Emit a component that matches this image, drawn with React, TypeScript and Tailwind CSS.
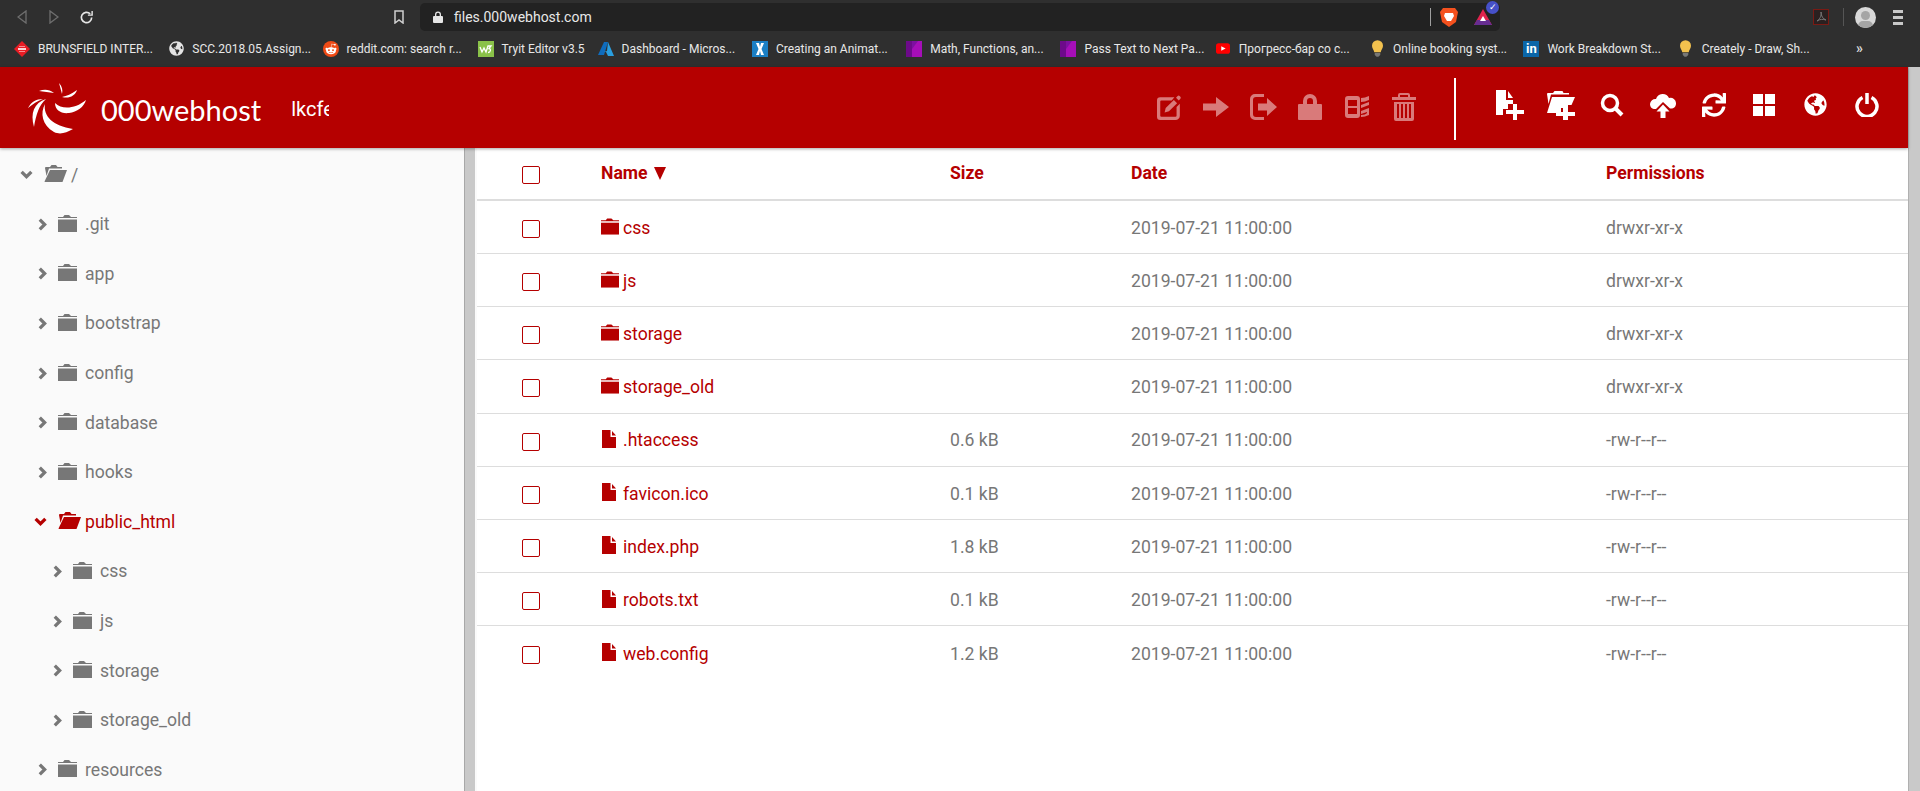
import React from 'react';
import { FaGlobeAmericas, FaRedditAlien, FaSync } from 'react-icons/fa';

function FolderClosed({ className }: { className?: string }) {
  return (
    <svg viewBox="0 0 19 17" fill="currentColor" className={className}>
      <path d="M0 3V2h5l1.5-2H11l2 2h6v1z" />
      <path d="M0 4.5h19V17H0z" />
    </svg>
  );
}

function FolderOpen({ className }: { className?: string }) {
  return (
    <svg viewBox="0 0 23 17" fill="currentColor" className={className}>
      <path d="M1 3l.5-1H6l1.5-2H12l1.5 2H18v1.5H5L2.5 11z" />
      <path d="M6 5h17l-4.5 12H0.5L1 15.5z" />
    </svg>
  );
}

function FileIcon({ className }: { className?: string }) {
  return (
    <svg viewBox="0 0 14 18" fill="currentColor" className={className}>
      <path d="M0 0h8.5v7H14v11H0z" />
      <path d="M10 1l4 4.5h-4z" />
    </svg>
  );
}

function Chevron({ open, className }: { open?: boolean; className?: string }) {
  return (
    <svg viewBox="0 0 12 12" fill="none" stroke="currentColor" strokeWidth="3" className={className}>
      {open ? <path d="M1.5 3.5 6 8l4.5-4.5" /> : <path d="M3.5 1.5 8 6l-4.5 4.5" />}
    </svg>
  );
}

function Logo() {
  return (
    <svg viewBox="0 0 60 52" fill="#fff" className="w-[60px] h-[52px]">
      <path d="M17 21c-2 12 8 22 28 25-7 4-13 6-19 3C14 42 12 30 17 21z" />
      <path d="M27 20c7 7 20 6 31-3-2 7-9 12-17 13-8 1-14-3-14-10z" />
      <path d="M6 44C2 30 6 20 18 16 11 22 8 32 6 44z" />
      <path d="M0 25c3-6 8-9 15-9-6 2-10 5-15 9z" />
      <path d="M11 8c5-2 10-2 15 2-5-1-10-1-15-2z" />
      <path d="M31 0c3 3 4 7 3 11-1-4-2-7-3-11z" />
      <path d="M34 14c5-1 9-3 15-7-2 6-8 9-15 7z" />
    </svg>
  );
}

function EditIcon() {
  return (
    <svg viewBox="1 1 23 23" className="w-[25px] h-[25px]" fill="currentColor">
      <path d="M4 3h13l-2.500 3H5a1 1 0 0 0-1 1v13a1 1 0 0 0 1 1h13a1 1 0 0 0 1-1v-8l3-3v11a4 4 0 0 1-4 4H4a3 3 0 0 1-3-3V6a3 3 0 0 1 3-3z" />
      <path d="M8 17l1-4 7.500-7.500 3 3L12 16zM18.500 3.500 20 2a1.300 1.300 0 0 1 1.800 0l.7.700a1.300 1.300 0 0 1 0 1.800L21 6z" />
    </svg>
  );
}

function ArrowIcon() {
  return (
    <svg viewBox="0 0 26 20" className="w-[26px] h-[20px]" fill="currentColor">
      <path d="M0 6.500h13V0l13 10-13 10v-6.500H0z" />
    </svg>
  );
}

function ExitIcon() {
  return (
    <svg viewBox="0 0 27 26" className="w-[27px] h-[26px]" fill="currentColor">
      <path d="M5 0h9v3H6a3 3 0 0 0-3 3v14a3 3 0 0 0 3 3h8v3H5a5 5 0 0 1-5-5V5a5 5 0 0 1 5-5z" />
      <path d="M8 9.500h9V4l10 9-10 9v-5.500H8z" />
    </svg>
  );
}

function LockIcon() {
  return (
    <svg viewBox="0 0 24 26" className="w-[24px] h-[26px]" fill="currentColor">
      <path fillRule="evenodd" d="M5 10V7a7 7 0 0 1 14 0v3h4a1 1 0 0 1 1 1v14a1 1 0 0 1-1 1H1a1 1 0 0 1-1-1V11a1 1 0 0 1 1-1zm4 0h6V7a3 3 0 0 0-6 0z" />
    </svg>
  );
}

function CompressedIcon() {
  return (
    <svg viewBox="0 0 24 26" className="w-[24px] h-[26px]" fill="currentColor">
      <path fillRule="evenodd" d="M3 2h9a3 3 0 0 1 3 3v16a3 3 0 0 1-3 3H3a3 3 0 0 1-3-3V5a3 3 0 0 1 3-3zm0 4v6h9V6zm0 8v6h9v-6z" />
      <path d="M16 4c3 0 5-1 8-2v4c-3 1-5 2-8 2zM16 11c3-1 5-2 8-3v3c-3 1-5 2-8 3zM16 17c3-1 5-2 8-3v7c-3 1-5 2-8 2v-2c3 0 5-1 6-2v-1c-2 1-4 1-6 2z" />
    </svg>
  );
}

function TrashIcon() {
  return (
    <svg viewBox="0 0 24 28" className="w-[24px] h-[28px]" fill="currentColor">
      <path d="M8 0h8a2 2 0 0 1 2 2v2h6v3H0V4h6V2a2 2 0 0 1 2-2zm0 2v2h8V2z" fillRule="evenodd" />
      <path fillRule="evenodd" d="M2 9h20v17a2 2 0 0 1-2 2H4a2 2 0 0 1-2-2zm3 2v14h2V11zm4 0v14h2V11zm4 0v14h2V11zm4 0v14h2V11z" />
    </svg>
  );
}

function NewFileIcon() {
  return (
    <svg viewBox="0 0 28 30" className="w-[28px] h-[30px]" fill="currentColor">
      <path d="M0 0h10v10h7v4h-5v5H7v6H0z" />
      <path d="M12 1l5 7h-5z" />
      <path d="M17 14h4v6h7v4h-7v6h-4v-6h-7v-4h7z" />
    </svg>
  );
}

function NewFolderIcon() {
  return (
    <svg viewBox="0 0 29 30" className="w-[29px] h-[30px]" fill="currentColor">
      <path d="M1 4l.5-1H7l1.500-2h8l1 2H23v1.500H5L2.500 14z" />
      <path d="M6 7h23l-3.500 8H22v3h-7v4h-3v1H1z" />
      <path d="M17 15h5v7h7v4h-7v4h-5v-4h-7v-4h7z" />
    </svg>
  );
}

function SearchIcon() {
  return (
    <svg viewBox="0 0 24 24" className="w-[24px] h-[24px]" fill="none" stroke="currentColor">
      <circle cx="10" cy="10" r="7.500" strokeWidth="3.500" />
      <path d="M15.500 15.500 22 22" strokeWidth="4" />
    </svg>
  );
}

function CloudUpIcon() {
  return (
    <svg viewBox="0 0 26 26" className="w-[26px] h-[26px]" fill="currentColor">
      <path d="M6 7a7 7 0 0 1 13-1 5.500 5.500 0 0 1 7 5.500c0 3-2 5-5 5h-1L13 10l-7 7H5c-3 0-5-2-5-5a5.500 5.500 0 0 1 6-5z" />
      <path d="M13 12.500l6.500 7H15.500V26h-5v-6.500H6.500z" />
    </svg>
  );
}

function GridIcon() {
  return (
    <svg viewBox="0 0 22 22" className="w-[22px] h-[22px]" fill="currentColor">
      <path d="M0 0h10v10H0zM12 0h10v10H12zM0 12h10v10H0zM12 12h10v10H12z" />
    </svg>
  );
}

function PowerIcon() {
  return (
    <svg viewBox="0 0 24 24" className="w-[24px] h-[24px]" fill="none" stroke="currentColor" strokeWidth="3.500">
      <path d="M7.500 4.500a10 10 0 1 0 9 0" />
      <path d="M12 0v11" />
    </svg>
  );
}

function Bulb() {
  return (
    <svg viewBox="0 0 12 18" className="w-[11px] h-[17px]">
      <path d="M6 0a6 6 0 0 1 6 6c0 3-2 4-2.500 7h-7C2 10 0 9 0 6a6 6 0 0 1 6-6z" fill="#f2c14e" />
      <path d="M3 14h6v2l-2 2H5l-2-2z" fill="#777" />
    </svg>
  );
}

function NotebookIcon() {
  return (
    <svg viewBox="0 0 16 16" className="w-4 h-4">
      <path d="M0 0h16v16H0z" fill="#a60eb8" />
      <path d="M0 0h6v16H0z" fill="#6d0a8a" />
      <path d="M6 0h6L6 8z" fill="#7c10a0" />
    </svg>
  );
}

const bookmarks: { label: string; width: string; icon: React.ReactNode }[] = [
  {
    label: 'BRUNSFIELD INTER...',
    width: 'w-[154.300px]',
    icon: (
      <svg viewBox="0 0 16 16" className="w-4 h-4">
        <path d="M8 0l8 8-8 8-8-8z" fill="#e81c24" />
        <path d="M4 7h8v2H4z" fill="#fff" opacity=".8" />
        <path d="M5 5h6v1H5zM5 10h6v1H5z" fill="#fff" opacity=".5" />
      </svg>
    ),
  },
  { label: 'SCC.2018.05.Assign...', width: 'w-[154.300px]', icon: <FaGlobeAmericas className="w-[15px] h-[15px] text-[#e4e4e4]" /> },
  {
    label: 'reddit.com: search r...',
    width: 'w-[155px]',
    icon: (
      <span className="w-4 h-4 rounded-full bg-[#f04b16] flex items-center justify-center">
        <FaRedditAlien className="w-3 h-3 text-white" />
      </span>
    ),
  },
  {
    label: 'Tryit Editor v3.5',
    width: 'w-[120px]',
    icon: (
      <svg viewBox="0 0 16 16" className="w-4 h-4">
        <path d="M0 0h16v16H0z" fill="#8ac249" />
        <path d="M2 6l2 5 2-4 2 4 2-6h3l-2 2.500c2 0 2 4-1 4" fill="none" stroke="#fff" strokeWidth="1.300" />
      </svg>
    ),
  },
  {
    label: 'Dashboard - Micros...',
    width: 'w-[154.300px]',
    icon: (
      <svg viewBox="0 0 16 16" className="w-4 h-4">
        <path d="M6 1h4l-4 13H0z" fill="#0f6cbd" />
        <path d="M10 1l6 14h-6l-2-4H6l3-1z" fill="#2a9fe0" />
      </svg>
    ),
  },
  {
    label: 'Creating an Animat...',
    width: 'w-[154.300px]',
    icon: (
      <svg viewBox="0 0 16 16" className="w-4 h-4">
        <path d="M0 0h16v16H0z" fill="#1b7fc4" />
        <path d="M4 2h3l1 4 1-4h3L9.500 8 12 14H9l-1-4-1 4H4l2.500-6z" fill="#fff" />
      </svg>
    ),
  },
  { label: 'Math, Functions, an...', width: 'w-[154.300px]', icon: <NotebookIcon /> },
  { label: 'Pass Text to Next Pa...', width: 'w-[154.300px]', icon: <NotebookIcon /> },
  {
    label: 'Прогресс-бар со с...',
    width: 'w-[154.300px]',
    icon: (
      <svg viewBox="0 0 16 12" className="w-[14px] h-[11px]">
        <rect width="16" height="12" rx="3" fill="#f00" />
        <path d="M6 3.500L11 6 6 8.500z" fill="#fff" />
      </svg>
    ),
  },
  { label: 'Online booking syst...', width: 'w-[154.300px]', icon: <Bulb /> },
  {
    label: 'Work Breakdown St...',
    width: 'w-[154.300px]',
    icon: (
      <span className="w-4 h-4 bg-[#0a66a8] text-white text-[13px] font-bold leading-4 text-center font-['Roboto',sans-serif]">
        in
      </span>
    ),
  },
  { label: 'Creately - Draw, Sh...', width: 'w-[154.300px]', icon: <Bulb /> },
];

function BrowserChrome() {
  return (
    <div className="h-[67px] bg-[#2f2f2f] font-['Roboto',sans-serif] text-[#e8e8e8] shrink-0">
      <div className="h-[31px] pt-[3px] flex">
        <div className="w-[420px] flex items-center shrink-0 text-[#6f6f6f]">
          <svg viewBox="0 0 10 14" className="w-[10px] h-[14px] ml-[17px]" fill="none" stroke="currentColor" strokeWidth="1.300">
            <path d="M9 1v12L1 7z" />
          </svg>
          <svg viewBox="0 0 10 14" className="w-[10px] h-[14px] ml-[22px]" fill="none" stroke="currentColor" strokeWidth="1.300">
            <path d="M1 1v12l8-6z" />
          </svg>
          <svg viewBox="0 0 16 16" className="w-[15px] h-[15px] ml-[20px] text-[#e6e6e6]" fill="none" stroke="currentColor" strokeWidth="1.800">
            <path d="M13.500 8a5.500 5.500 0 1 1-1.600-3.900" />
            <path d="M14 1v4.500H9.500" strokeWidth="1.500" />
          </svg>
          <svg viewBox="0 0 10 14" className="w-[10px] h-[14px] ml-[300px] text-[#d0d0d0]" fill="none" stroke="currentColor" strokeWidth="1.500">
            <path d="M1 1h8v12L5 10l-4 3z" />
          </svg>
        </div>
        <div className="w-[1080px] h-[28px] bg-[#222222] rounded-[5px] flex items-center pl-[13px] shrink-0">
          <svg viewBox="0 0 10 12" className="w-[10px] h-[12px] text-[#e6e6e6]" fill="currentColor">
            <path fillRule="evenodd" d="M2 5V3.500a3 3 0 0 1 6 0V5h1a1 1 0 0 1 1 1v5a1 1 0 0 1-1 1H1a1 1 0 0 1-1-1V6a1 1 0 0 1 1-1zm1.300 0h3.400V3.500a1.700 1.700 0 0 0-3.400 0z" />
          </svg>
          <span className="ml-[11px] text-[14px] leading-none">files.000webhost.com</span>
          <span className="ml-auto w-px h-[18px] bg-[#a0a0a0]" />
          <svg viewBox="0 0 18 20" className="w-[18px] h-[20px] ml-[9px]">
            <path d="M3 1h12l3 4-2 10-7 5-7-5L0 5z" fill="#f4511e" />
            <path d="M5 6h8l1 3-3 5H7L4 9z" fill="#fff" />
          </svg>
          <span className="relative ml-[16px] mr-[8px] w-[18px] h-[18px]">
            <svg viewBox="0 0 18 18" className="w-[18px] h-[18px]">
              <path d="M9 1l9 16H0z" fill="#e0234e" />
              <path d="M0 17l3-5h12l3 5z" fill="#662d91" />
              <path d="M9 8l3 5H6z" fill="#fff" />
            </svg>
            <span className="absolute -top-[7px] left-[12px] w-[13px] h-[13px] rounded-full bg-[#4650c8] text-[9px] leading-[13px] text-center text-white">
              ✓
            </span>
          </span>
        </div>
        <div className="flex-1 flex items-center">
          <span className="ml-[313px] w-4 h-4 border border-[#7a1a14] bg-[#2a2020] flex items-center justify-center">
            <svg viewBox="0 0 12 12" className="w-3 h-3" fill="none" stroke="#777" strokeWidth="1">
              <path d="M6 1c1 4-2 8-4 9 3-2 6-2 9-1-3-1-5-4-5-8z" />
            </svg>
          </span>
          <span className="ml-[14px] w-px h-[18px] bg-[#555555]" />
          <span className="ml-[11px] w-[21px] h-[21px] rounded-full bg-[#d8d8d8] relative overflow-hidden shrink-0">
            <span className="absolute left-[6px] top-[4px] w-[9px] h-[9px] rounded-full bg-[#a5a5a5]" />
            <span className="absolute left-[3px] top-[14px] w-[15px] h-[10px] rounded-full bg-[#a5a5a5]" />
          </span>
          <span className="ml-[17px] w-[10px] flex flex-col gap-[3px]">
            <span className="h-[3px] bg-[#c8c8c8]" />
            <span className="h-[3px] bg-[#c8c8c8]" />
            <span className="h-[3px] bg-[#c8c8c8]" />
          </span>
        </div>
      </div>
      <div className="h-[36px] pl-[14px] flex items-center pb-[1px]">
        {bookmarks.map((b) => (
          <div key={b.label} className={`${b.width} shrink-0 flex items-center gap-[8px] text-[12px] whitespace-nowrap`}>
            <span className="w-4 flex justify-center shrink-0">{b.icon}</span>
            <span>{b.label}</span>
          </div>
        ))}
        <span className="ml-[24px] text-[14px] font-bold text-[#d8d8d8]">»</span>
      </div>
    </div>
  );
}

function Header() {
  return (
    <header className="relative z-10 h-[81px] bg-[#b50000] flex text-white shadow-[0_1px_3px_rgba(0,0,0,0.35)] shrink-0 mr-[12px]">
      <div className="pl-[28px] pt-[16px] flex items-start">
        <Logo />
        <span className="ml-[13px] mt-[8px] font-['Lato',sans-serif] font-normal text-[29px] leading-[38px]">000webhost</span>
      </div>
      <div className="ml-[30px] mt-[29px] w-[38px] overflow-hidden h-[26px] font-['Roboto',sans-serif] text-[20px] leading-[26px]">
        lkcfe
      </div>
      <div className="ml-[817px] flex items-center text-[#d97a7a] pb-[1px]">
        {[EditIcon, ArrowIcon, ExitIcon, LockIcon, CompressedIcon, TrashIcon].map((Icon, i) => (
          <span key={i} className="w-[46.800px] flex justify-center">
            <Icon />
          </span>
        ))}
      </div>
      <div className="ml-[27px] mt-[11px] mb-[8px] w-[2px] bg-white" />
      <div className="ml-[29px] flex items-center pb-[6px]">
        <span className="w-[50px] flex justify-center"><NewFileIcon /></span>
        <span className="w-[52px] flex justify-center"><NewFolderIcon /></span>
        <span className="w-[51px] flex justify-center"><SearchIcon /></span>
        <span className="w-[51px] flex justify-center"><CloudUpIcon /></span>
        <span className="w-[50px] flex justify-center"><FaSync className="w-[24px] h-[24px]" /></span>
        <span className="w-[51px] flex justify-center"><GridIcon /></span>
        <span className="w-[51px] flex justify-center"><FaGlobeAmericas className="w-[23px] h-[23px]" /></span>
        <span className="w-[52px] flex justify-center"><PowerIcon /></span>
      </div>
    </header>
  );
}

type TreeNode = { name: string; depth: number; open?: boolean; active?: boolean };

const tree: TreeNode[] = [
  { name: '/', depth: 0, open: true },
  { name: '.git', depth: 1 },
  { name: 'app', depth: 1 },
  { name: 'bootstrap', depth: 1 },
  { name: 'config', depth: 1 },
  { name: 'database', depth: 1 },
  { name: 'hooks', depth: 1 },
  { name: 'public_html', depth: 1, open: true, active: true },
  { name: 'css', depth: 2 },
  { name: 'js', depth: 2 },
  { name: 'storage', depth: 2 },
  { name: 'storage_old', depth: 2 },
  { name: 'resources', depth: 1 },
];

function Sidebar() {
  return (
    <aside className="w-[477px] shrink-0 flex bg-[#fafafa] overflow-hidden">
      <div className="w-[464px] pt-[2px] font-['Roboto',sans-serif] text-[17.600px] text-[#777777]">
        {tree.map((n) => {
          const row = n.depth === 0 ? 'pl-[20px]' : n.depth === 1 ? 'pl-[36px]' : 'pl-[51px]';
          return (
            <div key={n.name + n.depth} className={`h-[49.600px] flex items-center ${row} ${n.active ? 'text-[#b50000]' : ''}`}>
              <Chevron open={n.open} className={`w-[13px] h-[13px] shrink-0 ${n.active ? '-ml-[2px] mr-[2px]' : ''}`} />
              {n.open ? (
                <FolderOpen className={`w-[23px] h-[17px] shrink-0 ${n.depth === 0 ? 'ml-[11px]' : 'ml-[9px]'} -mt-[2px]`} />
              ) : (
                <FolderClosed className="w-[19px] h-[17px] shrink-0 ml-[9px] -mt-[2px]" />
              )}
              <span className={n.open ? 'ml-[4px]' : 'ml-[8px]'}>{n.name}</span>
            </div>
          );
        })}
      </div>
      <div className="w-[13px] bg-[#c9c9c9] border-l border-[#a8a8a8] border-r-2 border-r-[#fafafa]" />
    </aside>
  );
}

const files = [
  { name: 'css', dir: true, size: '', perms: 'drwxr-xr-x' },
  { name: 'js', dir: true, size: '', perms: 'drwxr-xr-x' },
  { name: 'storage', dir: true, size: '', perms: 'drwxr-xr-x' },
  { name: 'storage_old', dir: true, size: '', perms: 'drwxr-xr-x' },
  { name: '.htaccess', dir: false, size: '0.6 kB', perms: '-rw-r--r--' },
  { name: 'favicon.ico', dir: false, size: '0.1 kB', perms: '-rw-r--r--' },
  { name: 'index.php', dir: false, size: '1.8 kB', perms: '-rw-r--r--' },
  { name: 'robots.txt', dir: false, size: '0.1 kB', perms: '-rw-r--r--' },
  { name: 'web.config', dir: false, size: '1.2 kB', perms: '-rw-r--r--' },
];

const gridCols = 'grid grid-cols-[124px_349px_181px_475px_1fr] items-center';

function Checkbox({ className }: { className?: string }) {
  return <span className={`block ml-[45px] w-[18px] h-[18px] rounded-[2px] border border-[#b50000] bg-white ${className ?? ''}`} />;
}

function FileTable() {
  return (
    <main className="flex-1 min-w-0 bg-white font-['Roboto',sans-serif] text-[17.600px] text-[#777777]">
      <div className={`${gridCols} h-[53px] border-b-2 border-[#dddddd] font-bold text-[#b50000]`}>
        <Checkbox className="mt-[2px]" />
        <span className="flex items-center gap-[6px]">
          Name
          <svg viewBox="0 0 12 13" className="w-[12px] h-[13px]" fill="currentColor">
            <path d="M0 0h12L6 13z" />
          </svg>
        </span>
        <span>Size</span>
        <span>Date</span>
        <span>Permissions</span>
      </div>
      {files.map((f, i) => (
        <div key={f.name} className={`${gridCols} h-[53.150px] ${i < files.length - 1 ? 'border-b border-[#dddddd]' : ''}`}>
          <Checkbox className="mt-[4px]" />
          <span className="flex items-center text-[#b50000] mt-[2px]">
            {f.dir ? (
              <FolderClosed className="w-[18px] h-[17px] shrink-0 mr-[4px] -mt-[3px]" />
            ) : (
              <FileIcon className="w-[14px] h-[18px] shrink-0 ml-[1px] mr-[7px] -mt-[3px]" />
            )}
            {f.name}
          </span>
          <span className="mt-[2px]">{f.size}</span>
          <span className="mt-[2px]">2019-07-21 11:00:00</span>
          <span className="mt-[2px]">{f.perms}</span>
        </div>
      ))}
    </main>
  );
}

export default function App() {
  return (
    <div className="h-[791px] w-[1920px] overflow-hidden flex flex-col relative">
      <BrowserChrome />
      <div className="flex-1 min-h-0 flex flex-col relative">
        <Header />
        <div className="flex-1 min-h-0 flex mr-[12px]">
          <Sidebar />
          <FileTable />
        </div>
        <div className="absolute right-0 top-0 bottom-0 w-[12px] bg-[#c9c9c9] border-l border-[#b0b0b0]" />
      </div>
    </div>
  );
}
